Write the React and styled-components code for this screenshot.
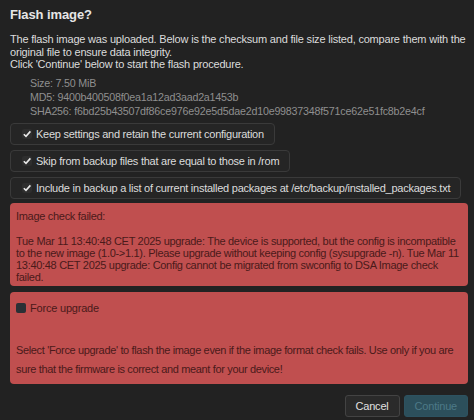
import React from "react";
import styled, { createGlobalStyle } from "styled-components";

const GlobalStyle = createGlobalStyle`
  html, body {
    margin: 0;
    padding: 0;
    background: #222222;
  }
  body {
    font-family: "Liberation Sans", Arial, sans-serif;
    color: #dcdcdc;
    letter-spacing: -0.2px;
  }
`;

const Modal = styled.div`
  width: 474px;
  height: 420px;
  box-sizing: border-box;
  padding: 4px 6px 0 10px;
  display: flex;
  flex-direction: column;
`;

const Title = styled.h3`
  margin: 0;
  font-size: 13px;
  font-weight: bold;
  line-height: 22px;
  letter-spacing: -0.1px;
  color: #e6e6e6;
`;

const Intro = styled.p`
  margin: 7px 0 0 0;
  font-size: 11px;
  line-height: 12.5px;
  color: #dcdcdc;
`;

const InfoList = styled.ul`
  list-style: none;
  margin: 5.5px 0 0 0;
  padding: 0 0 0 20px;
  font-size: 10.7px;
  line-height: 14px;
  letter-spacing: -0.2px;
  color: #8f8f8f;
  white-space: nowrap;
`;

const Options = styled.div`
  display: flex;
  flex-direction: column;
  align-items: flex-start;
  gap: 5px;
  margin-top: 5px;
`;

const OptionRow = styled.label`
  display: inline-flex;
  align-items: center;
  gap: 4px;
  height: 22px;
  box-sizing: border-box;
  padding: 0 10px 0 11px;
  border: 1px solid #3a3a3a;
  border-radius: 4px;
  background: #252525;
  font-size: 11px;
  letter-spacing: -0.25px;
  white-space: nowrap;
  color: #dcdcdc;
`;

const CheckBox = styled.span`
  display: inline-flex;
  align-items: center;
  justify-content: center;
  width: 10px;
  height: 10px;
  flex: none;
  border-radius: 2px;
  background: ${(p) => (p.$checked ? "#2e2e2e" : "#2a3035")};
  & svg {
    display: block;
  }
`;

const Alert = styled.div`
  margin-top: ${(p) => p.$gap}px;
  width: 458px;
  box-sizing: border-box;
  padding: ${(p) => p.$pad};
  border-radius: 4px;
  background: #c04f4f;
  color: #4a1a1a;
  font-size: 11px;
  line-height: 12px;
  letter-spacing: ${(p) => p.$track}px;
`;

const AlertText = styled.div`
  margin-top: ${(p) => p.$top || 0}px;
  line-height: ${(p) => p.$lh || 12}px;
`;

const ForceRow = styled.label`
  display: flex;
  align-items: center;
  gap: 4px;
  height: 14px;
  letter-spacing: -0.2px;
`;

const Footer = styled.div`
  display: flex;
  justify-content: flex-end;
  gap: 4px;
  margin-top: 11px;
  width: 458px;
`;

const Button = styled.button`
  height: 22px;
  box-sizing: border-box;
  padding: 0 10px;
  border-radius: 3px;
  font-family: "Liberation Sans", Arial, sans-serif;
  font-size: 11px;
  letter-spacing: -0.2px;
  border: 1px solid ${(p) => (p.$primary ? "#2d5260" : "#434343")};
  background: ${(p) => (p.$primary ? "#2c4f5b" : "#2a2a2a")};
  color: ${(p) => (p.$primary ? "#4c7a87" : "#e0e0e0")};
`;

function Check({ checked }) {
  return (
    <CheckBox $checked={checked}>
      {checked && (
        <svg width="10" height="10" viewBox="0 0 10 10">
          <path
            d="M1.8 5.2 L4 7.4 L8.4 2.4"
            fill="none"
            stroke="#e8e8e8"
            strokeWidth="1.6"
          />
        </svg>
      )}
    </CheckBox>
  );
}

const options = [
  "Keep settings and retain the current configuration",
  "Skip from backup files that are equal to those in /rom",
  "Include in backup a list of current installed packages at /etc/backup/installed_packages.txt",
];

export default function App() {
  return (
    <>
      <GlobalStyle />
      <Modal>
        <Title>Flash image?</Title>
        <Intro>
          The flash image was uploaded. Below is the checksum and file size
          listed, compare them with the original file to ensure data integrity.
          <br />
          Click 'Continue' below to start the flash procedure.
        </Intro>
        <InfoList>
          <li>Size: 7.50 MiB</li>
          <li>MD5: 9400b400508f0ea1a12ad3aad2a1453b</li>
          <li>
            SHA256:
            f6bd25b43507df86ce976e92e5d5dae2d10e99837348f571ce62e51fc8b2e4cf
          </li>
        </InfoList>
        <Options>
          {options.map((o) => (
            <OptionRow key={o}>
              <Check checked />
              {o}
            </OptionRow>
          ))}
        </Options>
        <Alert $gap={4} $pad="7px 6px 3px 6px" $track={-0.3}>
          <AlertText>Image check failed:</AlertText>
          <AlertText $top={13}>
            Tue Mar 11 13:40:48 CET 2025 upgrade: The device is supported, but
            the config is incompatible to the new image (1.0-&gt;1.1). Please
            upgrade without keeping config (sysupgrade -n). Tue Mar 11 13:40:48
            CET 2025 upgrade: Config cannot be migrated from swconfig to DSA
            Image check failed.
          </AlertText>
        </Alert>
        <Alert $gap={6} $pad="9px 3px 5px 6px" $track={-0.35}>
          <ForceRow>
            <Check />
            Force upgrade
          </ForceRow>
          <AlertText $top={26} $lh={19}>
            Select 'Force upgrade' to flash the image even if the image format
            check fails. Use only if you are sure that the firmware is correct
            and meant for your device!
          </AlertText>
        </Alert>
        <Footer>
          <Button>Cancel</Button>
          <Button $primary disabled>
            Continue
          </Button>
        </Footer>
      </Modal>
    </>
  );
}
